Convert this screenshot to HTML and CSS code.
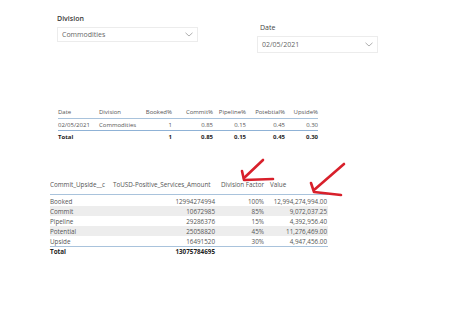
FILE: index.html
```html
<!DOCTYPE html>
<html>
<head>
<meta charset="utf-8">
<link rel="stylesheet" href="styles.css">
</head>
<body>
<div class="page">
  <div class="slicers">
    <div class="slicer">
      <div class="slicer-label">Division</div>
      <div class="dropdown div-dd">
        <span>Commodities</span>
        <svg class="chev" width="8" height="5" viewBox="0 0 8 5"><path d="M0.5 0.8 L4 4 L7.5 0.8" fill="none" stroke="#9a9a9a" stroke-width="0.8"/></svg>
      </div>
    </div>
    <div class="slicer date-slicer">
      <div class="slicer-label light">Date</div>
      <div class="dropdown date-dd">
        <span>02/05/2021</span>
        <svg class="chev" width="8" height="5" viewBox="0 0 8 5"><path d="M0.5 0.8 L4 4 L7.5 0.8" fill="none" stroke="#9a9a9a" stroke-width="0.8"/></svg>
      </div>
    </div>
  </div>

  <div class="t1">
    <div class="t1-row head">
      <div>Date</div><div>Division</div><div class="r">Booked%</div><div class="r">Commit%</div><div class="r">Pipeline%</div><div class="r">Potebtial%</div><div class="r">Upside%</div>
    </div>
    <div class="t1-row body">
      <div>02/05/2021</div><div>Commodities</div><div class="r">1</div><div class="r">0.85</div><div class="r">0.15</div><div class="r">0.45</div><div class="r">0.30</div>
    </div>
    <div class="t1-row total">
      <div>Total</div><div></div><div class="r">1</div><div class="r">0.85</div><div class="r">0.15</div><div class="r">0.45</div><div class="r">0.30</div>
    </div>
  </div>

  <div class="t2">
    <div class="t2-row head">
      <div class="sortcell">Commit_Upside__c<span class="sort"></span></div><div class="hp">ToUSD-Positive_Services_Amount</div><div class="hp">Division Factor</div><div class="hp">Value</div>
    </div>
    <div class="t2-body">
      <div class="t2-row"><div>Booked</div><div class="r">12994274994</div><div class="r">100%</div><div class="r">12,994,274,994.00</div></div>
      <div class="t2-row alt"><div>Commit</div><div class="r">10672985</div><div class="r">85%</div><div class="r">9,072,037.25</div></div>
      <div class="t2-row"><div>Pipeline</div><div class="r">29286376</div><div class="r">15%</div><div class="r">4,392,956.40</div></div>
      <div class="t2-row alt"><div>Potential</div><div class="r">25058820</div><div class="r">45%</div><div class="r">11,276,469.00</div></div>
      <div class="t2-row"><div>Upside</div><div class="r">16491520</div><div class="r">30%</div><div class="r">4,947,456.00</div></div>
    </div>
    <div class="t2-row total"><div>Total</div><div class="r">13075784695</div><div></div><div></div></div>
  </div>

  <svg class="marks" width="474" height="313" viewBox="0 0 474 313">
    <g fill="none" stroke="#d8202b" stroke-width="2.6" stroke-linecap="round" stroke-linejoin="round">
      <path d="M263 160 L244 178"/>
      <path d="M242 171 L244 180 L273 179"/>
      <path d="M344 164 L314 190"/>
      <path d="M311 183 L314 192 L341 195"/>
    </g>
  </svg>
</div>
</body>
</html>
```

FILE: styles.css
```css
html, body {
  margin: 0;
  padding: 0;
  background: #ffffff;
}

.page {
  position: relative;
  width: 474px;
  height: 313px;
  overflow: hidden;
  font-family: "Open Sans", "Noto Sans", sans-serif;
  color: #555;
}

.slicers {
  display: flex;
  align-items: flex-start;
  padding-top: 13px;
  padding-left: 57px;
}

.slicer-label {
  font-size: 7px;
  font-weight: 600;
  color: #3a3a3a;
  line-height: 11px;
  margin-bottom: 3px;
}

.slicer-label.light {
  font-weight: 400;
  color: #444;
  padding-left: 3px;
}

.date-slicer {
  margin-left: 59px;
  margin-top: 9px;
}

.dropdown {
  display: flex;
  align-items: center;
  justify-content: space-between;
  box-sizing: border-box;
  border: 1px solid #ececec;
  font-size: 7px;
  color: #666;
  padding: 0 4px 0 4px;
}

.div-dd {
  width: 141px;
  height: 15px;
}

.date-dd {
  width: 121px;
  height: 17px;
}

.chev {
  display: block;
}

/* table 1 */
.t1 {
  margin-top: 53px;
  margin-left: 58px;
  width: 260px;
  font-size: 6px;
}

.t1-row {
  display: grid;
  grid-template-columns: 41px 44px 29px 41px 33px 39px 33px;
  align-items: center;
}

.t1-row .r {
  text-align: right;
}

.t1-row.head {
  height: 12px;
  color: #555;
  border-bottom: 1px solid #a9c3dc;
}

.t1-row.body {
  height: 11px;
  color: #555;
  border-bottom: 1px solid #8fb2d6;
}

.t1-row.total {
  height: 11px;
  font-weight: 700;
  color: #1e1e1e;
}

/* table 2 */
.t2 {
  margin-top: 37px;
  margin-left: 50px;
  width: 278px;
  font-size: 6.3px;
}

.t2-row {
  display: grid;
  grid-template-columns: 58px 108px 49px 63px;
  align-items: center;
  height: 10px;
  color: #555;
}

.t2-row .r {
  text-align: right;
  padding-right: 1px;
}

.t2-row.alt {
  background: #ededed;
}

.t2-row.head {
  height: 15px;
  align-items: start;
  border-bottom: 1px solid #a9c3dc;
  color: #555;
}

.t2-row.head > div {
  line-height: 11px;
  white-space: nowrap;
  overflow: hidden;
}

.t2-row.head .hp {
  padding-left: 5px;
}

.sortcell {
  position: relative;
}

.sort {
  position: absolute;
  left: 1px;
  top: 11px;
  width: 0;
  height: 0;
  border-left: 2px solid transparent;
  border-right: 2px solid transparent;
  border-bottom: 2px solid #333;
}

.t2-body {
  padding-top: 1px;
  border-bottom: 1px solid #a9c3dc;
}

.t2-row.total {
  font-weight: 700;
  color: #1e1e1e;
  height: 8px;
}

.marks {
  position: absolute;
  left: 0;
  top: 0;
  pointer-events: none;
}
```
